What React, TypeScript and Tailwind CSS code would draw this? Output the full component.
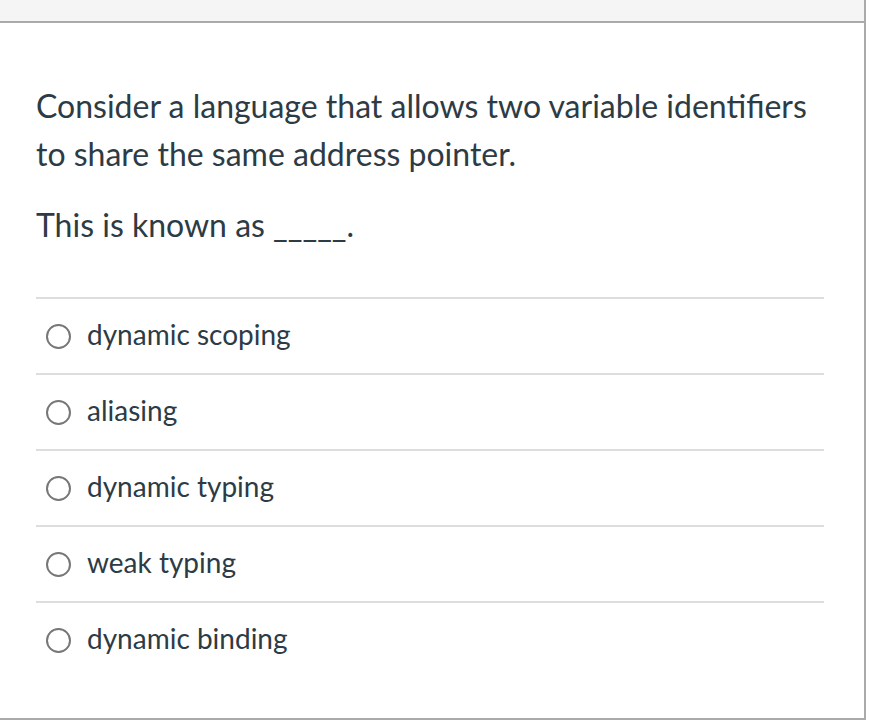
export default function App() {
  const options = [
    "dynamic scoping",
    "aliasing",
    "dynamic typing",
    "weak typing",
    "dynamic binding",
  ];

  return (
    <div className="w-[880px] h-[724px] bg-white">
      <div
        className="w-[866px] h-[720px] border-r-2 border-b-2 border-[#aaaaaa] text-[#2d3b45]"
        style={{ fontFamily: "Lato, 'Noto Sans', sans-serif" }}
      >
        <div className="h-[23px] bg-[#f5f5f5] border-b-2 border-[#aaaaaa]" />
        <div className="pl-[36px] pr-[40px] pt-[59px]">
          <p className="text-[32px] leading-[48px]">
            Consider a language that allows two variable identifiers to share the same address pointer.
          </p>
          <p className="mt-[23px] text-[32px] leading-[48px]">This is known as _____.</p>
          <div className="mt-[48px]">
            {options.map((o) => (
              <label
                key={o}
                className="flex h-[76px] items-center border-t-2 border-[#dddddd]"
              >
                <span className="ml-[10px] h-[25px] w-[25px] rounded-full border-2 border-[#777777]" />
                <span className="ml-[16px] mb-[4px] text-[28px] leading-[36px]">{o}</span>
              </label>
            ))}
          </div>
        </div>
      </div>
    </div>
  );
}
